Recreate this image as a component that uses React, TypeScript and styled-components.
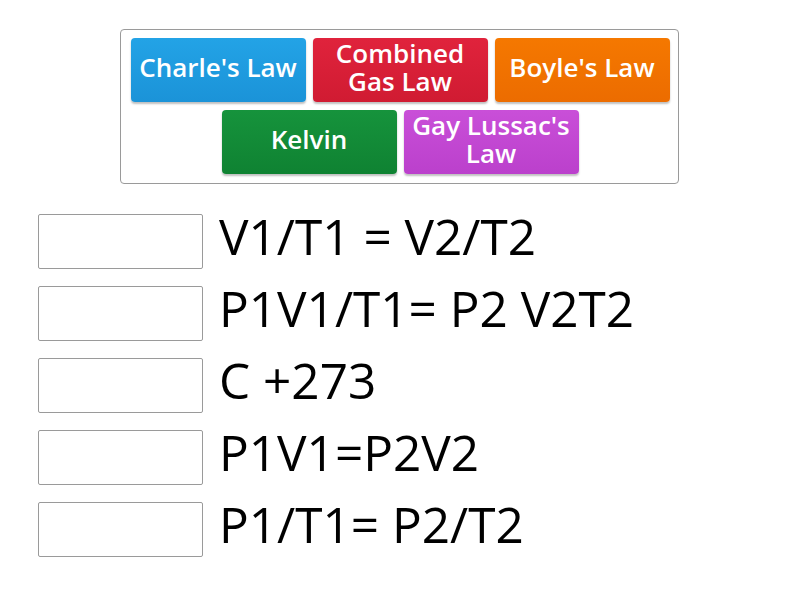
import React from "react";
import styled, { createGlobalStyle } from "styled-components";

const Global = createGlobalStyle`
  html, body { margin: 0; padding: 0; background: #fff; }
  body { font-family: "Open Sans", "Liberation Sans", sans-serif; }
`;

const Page = styled.div`
  width: 800px;
  height: 600px;
  display: flex;
  flex-direction: column;
  align-items: flex-start;
`;

const Bank = styled.div`
  margin: 29px 0 0 120px;
  width: 559px;
  height: 155px;
  box-sizing: border-box;
  border: 1px solid #9a9a9a;
  border-radius: 4px;
  padding: 8px 8px 8px 9px;
  display: flex;
  flex-wrap: wrap;
  justify-content: center;
  align-content: flex-start;
  gap: 8px 7px;
`;

const Tile = styled.div<{ $c1: string; $c2: string }>`
  width: 175px;
  height: 64px;
  border-radius: 4px;
  background: linear-gradient(${(p) => p.$c1}, ${(p) => p.$c2});
  box-shadow: 0 2px 2px rgba(0, 0, 0, 0.25);
  color: #fff;
  font-weight: 600;
  font-size: 26px;
  line-height: 28px;
  text-align: center;
  display: flex;
  align-items: center;
  justify-content: center;
  box-sizing: border-box;
  padding: 0 2px 7px;
`;

const List = styled.div`
  margin: 30px 0 0 38px;
  display: flex;
  flex-direction: column;
  gap: 17px;
`;

const Row = styled.div`
  display: flex;
  align-items: center;
  gap: 16px;
  height: 55px;
`;

const Slot = styled.div`
  width: 165px;
  height: 55px;
  box-sizing: border-box;
  border: 1px solid #9a9a9a;
  border-radius: 2px;
  background: #fff;
`;

const Formula = styled.div`
  font-size: 49.5px;
  color: #000;
  line-height: 55px;
  padding-bottom: 11px;
  white-space: nowrap;
`;

const tiles = [
  { label: "Charle's Law", c1: "#23a3e6", c2: "#1b93d8" },
  { label: "Combined Gas Law", c1: "#e0233c", c2: "#d01b32" },
  { label: "Boyle's Law", c1: "#f57800", c2: "#ec6c00" },
  { label: "Kelvin", c1: "#16933c", c2: "#0f8232" },
  { label: "Gay Lussac's Law", c1: "#c94fd8", c2: "#bb40cc" },
];

const formulas = [
  "V1/T1 = V2/T2",
  "P1V1/T1= P2 V2T2",
  "C +273",
  "P1V1=P2V2",
  "P1/T1= P2/T2",
];

export default function App() {
  return (
    <Page>
      <Global />
      <Bank>
        {tiles.map((t) => (
          <Tile key={t.label} $c1={t.c1} $c2={t.c2}>
            {t.label}
          </Tile>
        ))}
      </Bank>
      <List>
        {formulas.map((f) => (
          <Row key={f}>
            <Slot />
            <Formula>{f}</Formula>
          </Row>
        ))}
      </List>
    </Page>
  );
}
